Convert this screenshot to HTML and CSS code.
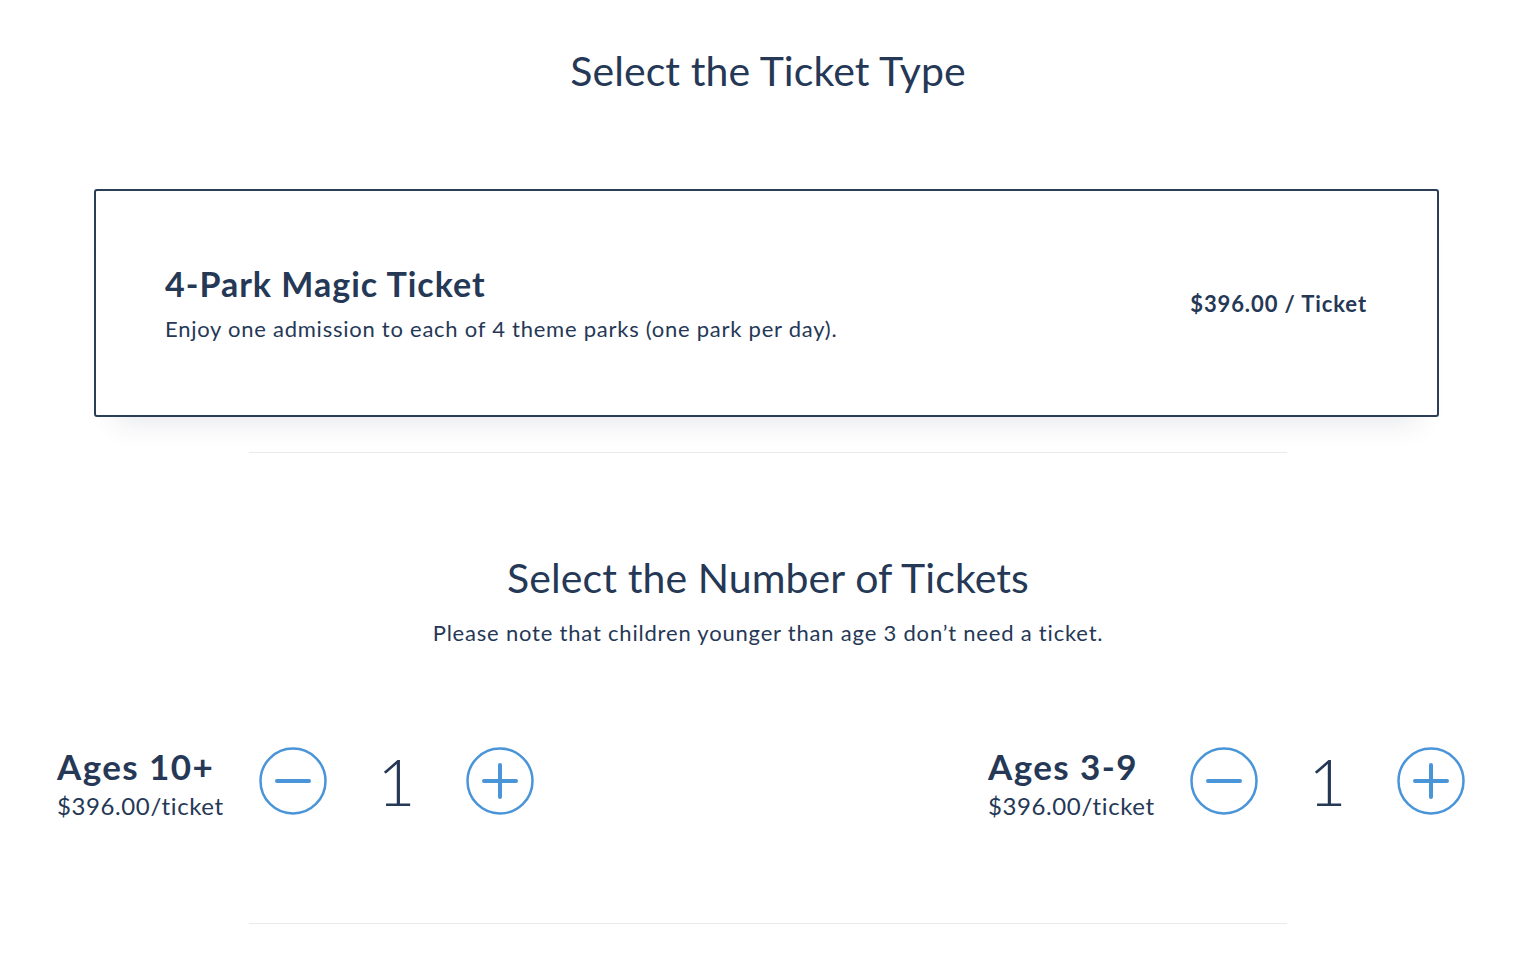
FILE: index.html
```html
<!DOCTYPE html>
<html lang="en">
<head>
<meta charset="utf-8">
<title>Select Tickets</title>
<link rel="stylesheet" href="styles.css">
</head>
<body>
<main class="page">
  <section class="type-section">
    <h1 class="section-title">Select the Ticket Type</h1>
    <div class="ticket-card">
      <div class="ticket-info">
        <h2 class="ticket-name">4-Park Magic Ticket</h2>
        <p class="ticket-desc">Enjoy one admission to each of 4 theme parks (one park per day).</p>
      </div>
      <div class="ticket-price">$396.00 / Ticket</div>
    </div>
    <hr class="divider">
  </section>

  <section class="count-section">
    <h1 class="section-title">Select the Number of Tickets</h1>
    <p class="note">Please note that children younger than age 3 don’t need a ticket.</p>
    <div class="counters">
      <div class="counter-group">
        <div class="age-label">
          <div class="age-name">Ages 10+</div>
          <div class="age-price">$396.00/ticket</div>
        </div>
        <button class="round-btn" aria-label="Decrease">
          <svg viewBox="0 0 68 68" width="68" height="68"><circle cx="34" cy="34" r="32.5" fill="none" stroke="#4a94d8" stroke-width="2.5"/><line x1="18" y1="34" x2="50" y2="34" stroke="#4a94d8" stroke-width="4" stroke-linecap="round"/></svg>
        </button>
        <span class="count">1</span>
        <button class="round-btn" aria-label="Increase">
          <svg viewBox="0 0 68 68" width="68" height="68"><circle cx="34" cy="34" r="32.5" fill="none" stroke="#4a94d8" stroke-width="2.5"/><line x1="18" y1="34" x2="50" y2="34" stroke="#4a94d8" stroke-width="4" stroke-linecap="round"/><line x1="34" y1="18" x2="34" y2="50" stroke="#4a94d8" stroke-width="4" stroke-linecap="round"/></svg>
        </button>
      </div>
      <div class="counter-group">
        <div class="age-label">
          <div class="age-name">Ages 3-9</div>
          <div class="age-price">$396.00/ticket</div>
        </div>
        <button class="round-btn" aria-label="Decrease">
          <svg viewBox="0 0 68 68" width="68" height="68"><circle cx="34" cy="34" r="32.5" fill="none" stroke="#4a94d8" stroke-width="2.5"/><line x1="18" y1="34" x2="50" y2="34" stroke="#4a94d8" stroke-width="4" stroke-linecap="round"/></svg>
        </button>
        <span class="count">1</span>
        <button class="round-btn" aria-label="Increase">
          <svg viewBox="0 0 68 68" width="68" height="68"><circle cx="34" cy="34" r="32.5" fill="none" stroke="#4a94d8" stroke-width="2.5"/><line x1="18" y1="34" x2="50" y2="34" stroke="#4a94d8" stroke-width="4" stroke-linecap="round"/><line x1="34" y1="18" x2="34" y2="50" stroke="#4a94d8" stroke-width="4" stroke-linecap="round"/></svg>
        </button>
      </div>
    </div>
    <hr class="divider bottom">
  </section>
</main>
</body>
</html>
```

FILE: styles.css
```css
* { box-sizing: border-box; }

html, body {
  margin: 0;
  padding: 0;
  background: #ffffff;
}

body {
  font-family: Lato, "Open Sans", "Liberation Sans", sans-serif;
  color: #253856;
  width: 1536px;
  height: 973px;
  overflow: hidden;
}

.page {
  display: flex;
  flex-direction: column;
}

.section-title {
  margin: 0;
  font-weight: 400;
  font-size: 41px;
  line-height: 48px;
  letter-spacing: 0.1px;
  text-align: center;
  color: #253856;
}

.type-section {
  display: flex;
  flex-direction: column;
  align-items: center;
  padding-top: 47px;
}

.ticket-card {
  margin-top: 94px;
  width: 1345px;
  height: 228px;
  margin-left: -3px;
  border: 2px solid #2c3d58;
  border-radius: 3px;
  display: flex;
  align-items: center;
  justify-content: space-between;
  padding: 0 70px 0 69px;
  box-shadow: 0 26px 28px -22px rgba(30, 45, 70, 0.12);
}

.ticket-name {
  margin: 0;
  font-size: 34px;
  font-weight: 700;
  line-height: 40px;
  letter-spacing: 1px;
}

.ticket-desc {
  margin: 11px 0 0 0;
  font-size: 22px;
  line-height: 28px;
  letter-spacing: 0.75px;
}

.ticket-price {
  font-size: 22px;
  font-weight: 700;
  letter-spacing: 0.9px;
  margin-top: 1px;
}

.divider {
  width: 1038px;
  border: 0;
  border-top: 1px solid #e8eaed;
  margin: 35px 0 0 0;
}

.count-section {
  display: flex;
  flex-direction: column;
  align-items: center;
  padding-top: 101px;
}

.note {
  margin: 16px 0 0 0;
  font-size: 22px;
  line-height: 30px;
  letter-spacing: 0.8px;
  text-align: center;
}

.counters {
  align-self: stretch;
  display: flex;
  justify-content: space-between;
  padding: 0 71px 0 57px;
  margin-top: 92px;
}

.counter-group {
  display: flex;
  align-items: center;
}

.age-label {
  width: 202px;
  margin-top: 6px;
  display: flex;
  flex-direction: column;
}

.age-name {
  font-size: 35px;
  font-weight: 700;
  line-height: 40px;
  letter-spacing: 1.4px;
}

.age-price {
  margin-top: 4px;
  font-size: 24px;
  line-height: 32px;
  letter-spacing: 0.6px;
}

.round-btn {
  width: 68px;
  height: 68px;
  padding: 0;
  border: 0;
  background: none;
  display: flex;
}

.count {
  width: 139px;
  text-align: center;
  font-size: 66px;
  font-weight: 300;
  line-height: 68px;
  color: #253856;
}

.divider.bottom {
  margin-top: 101px;
}
```
